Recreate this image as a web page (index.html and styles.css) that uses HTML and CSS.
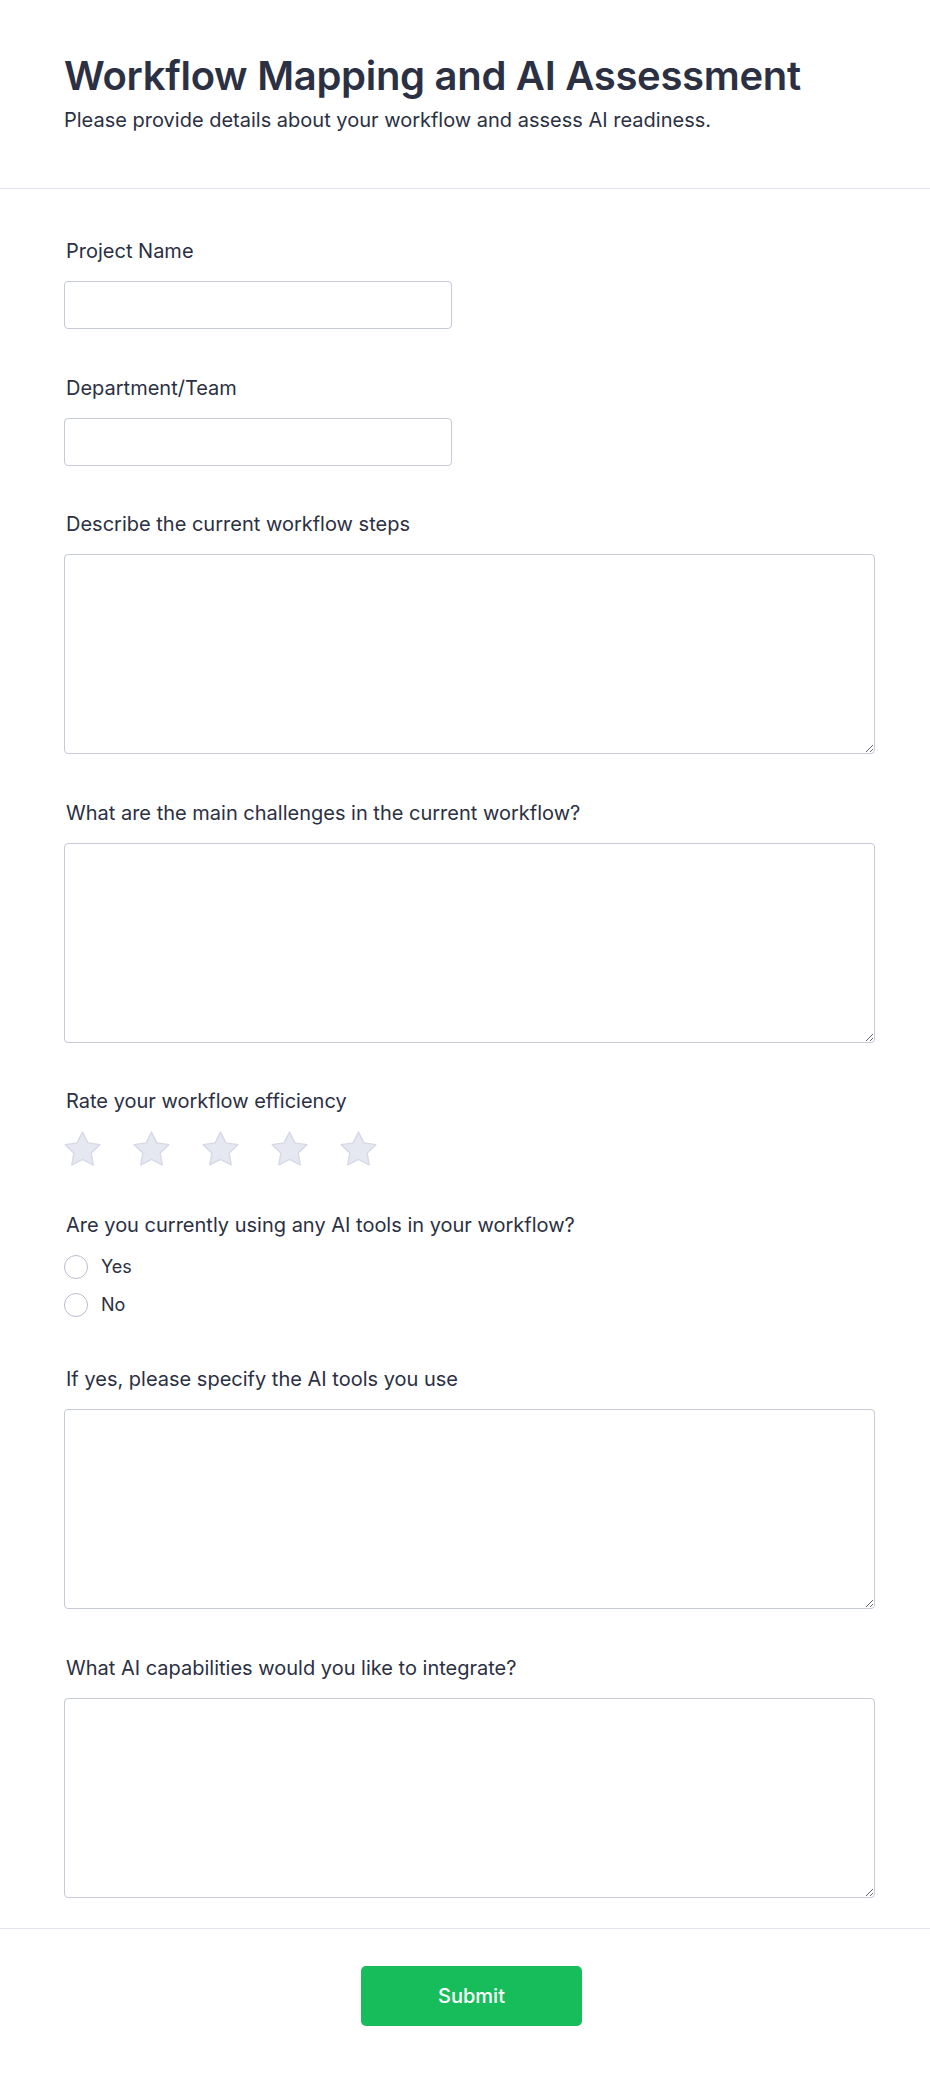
FILE: index.html
```html
<!DOCTYPE html>
<html>
  <head>
    <title>Workflow Mapping and AI Assessment</title>
    <link rel="stylesheet" href="styles.css">
  </head>
  <body>
    <div class="page">
      <!-- Form header -->
      <div class="form-header">
        <h1>Workflow Mapping and AI Assessment</h1>
        <p>Please provide details about your workflow and assess AI readiness.</p>
      </div>

      <!-- Questions -->
      <form class="form-body">
        <div class="field">
          <label for="project-name">Project Name</label>
          <input type="text" id="project-name" class="text-input" />
        </div>

        <div class="field">
          <label for="department">Department/Team</label>
          <input type="text" id="department" class="text-input" />
        </div>

        <div class="field">
          <label for="workflow-steps">Describe the current workflow steps</label>
          <textarea id="workflow-steps"></textarea>
        </div>

        <div class="field">
          <label for="challenges">What are the main challenges in the current workflow?</label>
          <textarea id="challenges"></textarea>
        </div>

        <div class="field">
          <label>Rate your workflow efficiency</label>
          <div class="rating">
            <svg class="star" viewBox="1.4 1.4 21.2 20.2"><path d="M12 2l3.09 6.26L22 9.27l-5 4.87 1.18 6.88L12 17.77l-6.18 3.25L7 14.14 2 9.27l6.91-1.01L12 2z"/></svg>
            <svg class="star" viewBox="1.4 1.4 21.2 20.2"><path d="M12 2l3.09 6.26L22 9.27l-5 4.87 1.18 6.88L12 17.77l-6.18 3.25L7 14.14 2 9.27l6.91-1.01L12 2z"/></svg>
            <svg class="star" viewBox="1.4 1.4 21.2 20.2"><path d="M12 2l3.09 6.26L22 9.27l-5 4.87 1.18 6.88L12 17.77l-6.18 3.25L7 14.14 2 9.27l6.91-1.01L12 2z"/></svg>
            <svg class="star" viewBox="1.4 1.4 21.2 20.2"><path d="M12 2l3.09 6.26L22 9.27l-5 4.87 1.18 6.88L12 17.77l-6.18 3.25L7 14.14 2 9.27l6.91-1.01L12 2z"/></svg>
            <svg class="star" viewBox="1.4 1.4 21.2 20.2"><path d="M12 2l3.09 6.26L22 9.27l-5 4.87 1.18 6.88L12 17.77l-6.18 3.25L7 14.14 2 9.27l6.91-1.01L12 2z"/></svg>
          </div>
        </div>

        <div class="field">
          <label>Are you currently using any AI tools in your workflow?</label>
          <div class="radio-list">
            <label class="radio-option">
              <input type="radio" name="using-ai" value="yes" />
              <span>Yes</span>
            </label>
            <label class="radio-option">
              <input type="radio" name="using-ai" value="no" />
              <span>No</span>
            </label>
          </div>
        </div>

        <div class="field">
          <label for="ai-tools">If yes, please specify the AI tools you use</label>
          <textarea id="ai-tools"></textarea>
        </div>

        <div class="field">
          <label for="ai-capabilities">What AI capabilities would you like to integrate?</label>
          <textarea id="ai-capabilities"></textarea>
        </div>
      </form>

      <!-- Footer with submit -->
      <div class="form-footer">
        <button type="submit" class="submit-button">Submit</button>
      </div>
    </div>
  </body>
</html>
```

FILE: styles.css
```css
:root {
  --text-color: #2b3043;
  --border-color: #c6c9d6;
  --divider-color: #e1e4ec;
  --submit-color: #18bd5b;
}

/* Basic resets */
* {
  margin: 0;
  padding: 0;
  box-sizing: border-box;
}

body {
  font-family: Inter, "Noto Sans", sans-serif;
  color: var(--text-color);
  background: #fff;
}

/* Header */
.form-header {
  padding: 52px 55px 53px 64px;
  border-bottom: 1px solid var(--divider-color);
}

.form-header h1 {
  font-size: 40px;
  line-height: 48px;
  font-weight: 600;
  letter-spacing: -0.3px;
}

.form-header p {
  margin-top: 5px;
  font-size: 20px;
  line-height: 30px;
}

/* Questions */
.form-body {
  display: flex;
  flex-direction: column;
  gap: 43.5px;
  padding: 47px 55px 30px 64px;
}

.field {
  display: flex;
  flex-direction: column;
  gap: 15px;
}

.field > label {
  font-size: 20px;
  line-height: 30px;
  font-weight: 400;
  padding-left: 2px;
}

.text-input,
textarea {
  border: 1px solid var(--border-color);
  border-radius: 4px;
  background: #fff;
  font-family: inherit;
  font-size: 18px;
  color: var(--text-color);
  padding: 10px 12px;
}

.text-input {
  width: 388px;
  height: 48px;
}

textarea {
  width: 100%;
  height: 200px;
  resize: vertical;
}

/* Star rating */
.rating {
  display: flex;
  gap: 32px;
  height: 35px;
}

.star {
  width: 37px;
  height: 35px;
  fill: #e5e8f1;
  stroke: #d5d9e5;
  stroke-width: 0.8;
  stroke-linejoin: round;
}

/* Radio buttons */
.radio-list {
  display: flex;
  flex-direction: column;
  gap: 14px;
  padding-bottom: 4px;
}

.radio-option {
  display: flex;
  align-items: center;
  gap: 13px;
  font-size: 18px;
  line-height: 24px;
}

.radio-option input {
  appearance: none;
  width: 24px;
  height: 24px;
  border: 1px solid #b9bdcd;
  border-radius: 50%;
  background: #fff;
}

/* Footer */
.form-footer {
  display: flex;
  justify-content: center;
  padding: 37px 53px 49px 66px;
  border-top: 1px solid var(--divider-color);
}

.submit-button {
  width: 221px;
  height: 60px;
  border: none;
  border-radius: 5px;
  background: var(--submit-color);
  color: #fff;
  font-family: inherit;
  font-size: 20px;
  font-weight: 500;
  cursor: pointer;
}
```
